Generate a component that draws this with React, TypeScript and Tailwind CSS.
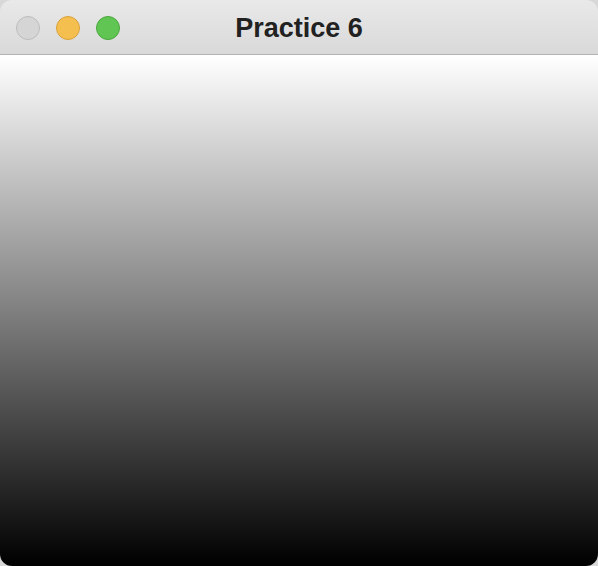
import React from 'react'

const App = () => {
  return (
    <div className="w-[598px] h-[566px] bg-[#d8d8d8] overflow-hidden">
      <div className="w-full h-full rounded-[12px] overflow-hidden flex flex-col">
        <div className="relative h-[55px] shrink-0 flex items-center bg-[linear-gradient(to_bottom,#e9e9e9,#d9d9d9)] border-b border-[#b3b3b3]">
          <div className="flex items-center gap-[16px] pl-[16px] pt-[1px]">
            <span className="w-[24px] h-[24px] rounded-full bg-[#d5d5d5] border border-[#bdbdbd]" />
            <span className="w-[24px] h-[24px] rounded-full bg-[#f5bf4f] border border-[#d9a33a]" />
            <span className="w-[24px] h-[24px] rounded-full bg-[#61c554] border border-[#4aa73c]" />
          </div>
          <div className="absolute inset-0 flex items-center justify-center pt-[3px] font-['Liberation_Sans',Arial,sans-serif] font-bold text-[27px] text-[#212121]">
            Practice 6
          </div>
        </div>
        <div className="flex-1 bg-[linear-gradient(to_bottom,#ffffff,#000000)]" />
      </div>
    </div>
  )
}

export default App
